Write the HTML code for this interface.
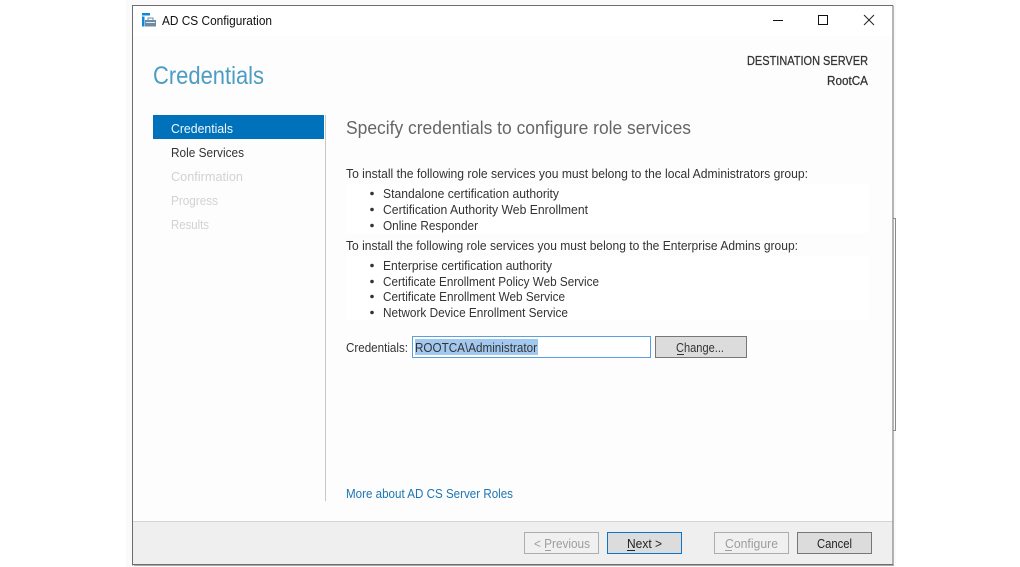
<!DOCTYPE html>
<html><head><meta charset="utf-8"><style>
html,body{margin:0;padding:0;background:#fff}
svg{display:block}
text{font-family:"Liberation Sans",sans-serif;font-size:12.5px;fill:#333}
</style></head><body>
<svg width="1020" height="567" viewBox="0 0 1020 567" xmlns="http://www.w3.org/2000/svg">
<rect width="1020" height="567" fill="#fff"/>
<rect x="126" y="0" width="770" height="567" fill="#fafafa"/>
<rect x="133" y="6" width="760" height="559" fill="#fdfdfd"/>
<rect x="133" y="6" width="760" height="30" fill="#fff"/>
<rect x="133" y="522" width="760" height="43" fill="#efefef"/>
<rect x="133" y="521" width="760" height="1" fill="#d4d4d4"/>
<path d="M132.500 565.500V5.500H893M893 5.500V564.500H132.500" fill="none" stroke="#6d6d6d" stroke-width="1"/>
<rect x="134" y="565" width="760" height="1" fill="#aaa"/>
<path d="M893 218.500h2.500v212H893" fill="none" stroke="#8a8a8a"/>

<rect x="142" y="13" width="8" height="2.500" fill="#0f86d6"/>
<rect x="142" y="16.500" width="2.500" height="10" fill="#0f86d6"/>
<rect x="145" y="20" width="11" height="6.500" fill="#6d8ba4"/>
<path d="M148 20v-2h5v2" fill="none" stroke="#6d8ba4"/>
<rect x="146" y="22" width="9" height="1" fill="#e4ecf2"/>
<text x="162" y="25" textLength="110" lengthAdjust="spacingAndGlyphs" style="fill:#111">AD CS Configuration</text>

<rect x="773" y="20" width="10" height="1" fill="#111"/>
<rect x="818.500" y="15.500" width="9" height="9" fill="none" stroke="#111"/>
<path d="M864 15l10 10M874 15l-10 10" stroke="#222" fill="none"/>

<text x="153" y="84" textLength="111" lengthAdjust="spacingAndGlyphs" style="font-size:25px;fill:#4c9cc4">Credentials</text>
<text x="747" y="65" textLength="121" lengthAdjust="spacingAndGlyphs" style="fill:#333;stroke:#333;stroke-width:.25">DESTINATION SERVER</text>
<text x="827" y="85" textLength="41" lengthAdjust="spacingAndGlyphs" style="fill:#333;stroke:#333;stroke-width:.25">RootCA</text>

<rect x="153" y="115" width="171" height="24" fill="#0072bc"/>
<rect x="325" y="115" width="1" height="386" fill="#c8c8c8"/>
<text x="171" y="133" textLength="62" lengthAdjust="spacingAndGlyphs" style="fill:#f2f8fc">Credentials</text>
<text x="171" y="157" textLength="73" lengthAdjust="spacingAndGlyphs">Role Services</text>
<text x="171" y="181" textLength="72" lengthAdjust="spacingAndGlyphs" style="fill:#d2d2d2">Confirmation</text>
<text x="171" y="205" textLength="47" lengthAdjust="spacingAndGlyphs" style="fill:#d2d2d2">Progress</text>
<text x="171" y="229" textLength="38" lengthAdjust="spacingAndGlyphs" style="fill:#d2d2d2">Results</text>

<text x="346" y="134" textLength="345" lengthAdjust="spacingAndGlyphs" style="font-size:18.500px;fill:#666">Specify credentials to configure role services</text>

<rect x="346" y="184" width="523" height="49" fill="#fff"/>
<rect x="346" y="256" width="523" height="64" fill="#fff"/>
<text x="346" y="178" textLength="462" lengthAdjust="spacingAndGlyphs">To install the following role services you must belong to the local Administrators group:</text>
<circle cx="372" cy="193.500" r="1.800" fill="#333"/>
<text x="383" y="198" textLength="176" lengthAdjust="spacingAndGlyphs">Standalone certification authority</text>
<circle cx="372" cy="209.500" r="1.800" fill="#333"/>
<text x="383" y="214" textLength="205" lengthAdjust="spacingAndGlyphs">Certification Authority Web Enrollment</text>
<circle cx="372" cy="225.500" r="1.800" fill="#333"/>
<text x="383" y="230" textLength="95" lengthAdjust="spacingAndGlyphs">Online Responder</text>
<text x="346" y="250" textLength="452" lengthAdjust="spacingAndGlyphs">To install the following role services you must belong to the Enterprise Admins group:</text>
<circle cx="372" cy="265.500" r="1.800" fill="#333"/>
<text x="383" y="270" textLength="169" lengthAdjust="spacingAndGlyphs">Enterprise certification authority</text>
<circle cx="372" cy="281.500" r="1.800" fill="#333"/>
<text x="383" y="286" textLength="216" lengthAdjust="spacingAndGlyphs">Certificate Enrollment Policy Web Service</text>
<circle cx="372" cy="296.500" r="1.800" fill="#333"/>
<text x="383" y="301" textLength="182" lengthAdjust="spacingAndGlyphs">Certificate Enrollment Web Service</text>
<circle cx="372" cy="312.500" r="1.800" fill="#333"/>
<text x="383" y="317" textLength="185" lengthAdjust="spacingAndGlyphs">Network Device Enrollment Service</text>

<text x="346" y="352" textLength="62" lengthAdjust="spacingAndGlyphs">Credentials:</text>
<rect x="412.500" y="336.500" width="238" height="21" fill="#fff" stroke="#5aa0de"/>
<rect x="415" y="339" width="123" height="16" fill="#a3c8ef"/>
<text x="415" y="352" textLength="122" lengthAdjust="spacingAndGlyphs">ROOTCA\Administrator</text>
<rect x="655.500" y="336.500" width="91" height="21" fill="#dcdcdc" stroke="#777"/>
<text x="676" y="352" textLength="48" lengthAdjust="spacingAndGlyphs">Change...</text>
<rect x="677" y="354" width="7" height="1" fill="#333"/>

<text x="346" y="498" textLength="167" lengthAdjust="spacingAndGlyphs" style="fill:#1c75b4">More about AD CS Server Roles</text>

<rect x="524.500" y="532.500" width="74" height="21" fill="#f0f0f0" stroke="#adadad"/>
<text x="534" y="548" textLength="56" lengthAdjust="spacingAndGlyphs" style="fill:#9d9d9d">&lt; Previous</text>
<rect x="545" y="550" width="6" height="1" fill="#9d9d9d"/>
<rect x="607.500" y="532.500" width="74" height="21" fill="#dcdcdc" stroke="#0f74c4"/>
<text x="627" y="548" textLength="35" lengthAdjust="spacingAndGlyphs" style="fill:#222">Next &gt;</text>
<rect x="627" y="550" width="8" height="1" fill="#222"/>
<rect x="714.500" y="532.500" width="74" height="21" fill="#f0f0f0" stroke="#adadad"/>
<text x="725" y="548" textLength="53" lengthAdjust="spacingAndGlyphs" style="fill:#9d9d9d">Configure</text>
<rect x="725" y="550" width="7" height="1" fill="#9d9d9d"/>
<rect x="797.500" y="532.500" width="74" height="21" fill="#dcdcdc" stroke="#777"/>
<text x="817" y="548" textLength="35" lengthAdjust="spacingAndGlyphs" style="fill:#222">Cancel</text>
</svg>
</body></html>
